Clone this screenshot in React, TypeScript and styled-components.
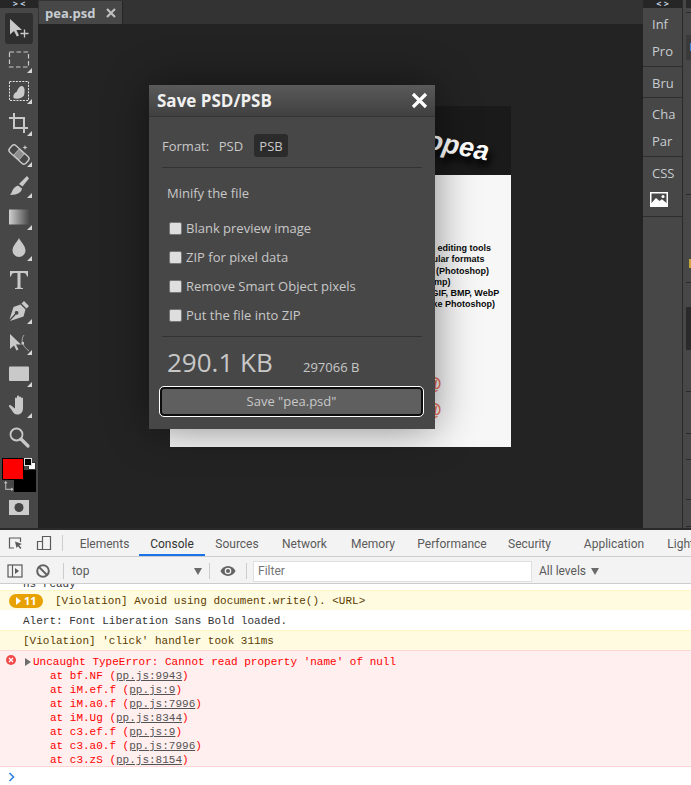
import React from 'react';
import styled, { createGlobalStyle } from 'styled-components';

const GlobalStyle = createGlobalStyle`
  html, body {
    margin: 0;
    padding: 0;
    background: #232323;
  }
  * {
    box-sizing: border-box;
  }
`;

const uiFont = `"Open Sans", "Noto Sans", sans-serif`;
const devFont = `Roboto, "Open Sans", sans-serif`;
const monoFont = `"Liberation Mono", monospace`;
const iconGrey = '#c9c9c9';

const tools = [
  <g key="move" fill={iconGrey}>
    <path d="M1 0v15.500l4-3.600 2.800 5.600 2.200-1-2.600-5.400H13z" />
    <path d="M15.500 10.500v8M11.500 14.500h8" stroke={iconGrey} strokeWidth="1.300" />
  </g>,
  <rect key="marquee" x="0.500" y="2" width="19" height="15" fill="none" stroke={iconGrey} strokeWidth="1.200" strokeDasharray="4.500 2.500" />,
  <g key="lasso">
    <rect x="0.500" y="0.500" width="19" height="19" fill="none" stroke="#e2e2e2" strokeWidth="1" strokeDasharray="2 1.200" />
    <path d="M4.500 17c-.8-3 .8-5 3.500-6.500.8-3 3.200-6 5.500-5.300 2.500.9 2.500 5.500 1.500 9-.8 2.500-8 4.800-10.500 2.800z" fill={iconGrey} />
  </g>,
  <path key="crop" d="M5 0v15h14M0 5h15v15" fill="none" stroke={iconGrey} strokeWidth="2" />,
  <g key="heal" fill="none" stroke={iconGrey}>
    <rect x="-1" y="6" width="22" height="9" rx="3" transform="rotate(42 10 10.500)" strokeWidth="1.400" />
    <rect x="6.500" y="6.500" width="7" height="8" transform="rotate(42 10 10.500)" fill="#8d8d8d" strokeWidth="0.800" />
    <path d="M16 1l.7 1.800 1.800.7-1.800.7-.7 1.800-.7-1.800-1.800-.7 1.800-.7z" fill={iconGrey} stroke="none" />
  </g>,
  <path key="brush" d="M18 0l2 2.500-6.500 8-3.500-2.500zM9 9.500l4 3c-.5 3.500-3.500 6.500-12 6.500 2.500-2 1.500-7 8-9.500z" fill={iconGrey} />,
  <rect key="gradient" x="0" y="2.500" width="20" height="15" fill="url(#toolGradient)" />,
  <path key="drop" d="M10 0c1 3 6.500 7.500 6.500 12.500a6.500 6.500 0 0 1-13 0C3.500 7.500 9 3 10 0z" fill={iconGrey} />,
  <path key="type" d="M1 1h18v5.500h-1c-.5-2.500-1.500-3.500-3.500-3.500h-3v14c0 .8.800 1 2.500 1v1H6v-1c1.700 0 2.500-.2 2.500-1V3h-3C3.500 3 2.500 4 2 6.500H1z" fill={iconGrey} />,
  <path key="pen" d="M15 0l5 5-2.500 2.500-5-5zM11.500 3.500l5 5-2 7L1 20l6-6.500a1.800 1.800 0 1 0-1-1L.5 18.500 4.500 6z" fill={iconGrey} />,
  <g key="pathselect" fill={iconGrey}>
    <path d="M1 1v15l4-3.500 2.500 5 2-1-2.500-5h5z" />
    <path d="M15 2c-3 4-3 10 5 16" fill="none" stroke="#a5a5a5" strokeWidth="1" />
    <rect x="12.500" y="9" width="2.500" height="2.500" />
  </g>,
  <rect key="rect" x="0" y="2.500" width="20" height="14.500" rx="1" fill={iconGrey} />,
  <path key="hand" d="M6 9V3.500a1 1 0 0 1 2 0V1.500a1 1 0 0 1 2 0v1a1 1 0 0 1 2 0v1a1 1 0 0 1 2 0V13c0 4-2 6.500-5.500 6.500-3 0-4-1.500-5.500-4L0 11.500c-.5-1 1-2 2-1l4 3z" fill={iconGrey} />,
  <g key="zoom" fill="none" stroke={iconGrey}>
    <circle cx="7.500" cy="7.500" r="6" strokeWidth="1.800" />
    <path d="M12 12l7 7" strokeWidth="3.200" strokeLinecap="round" />
  </g>,
];

const noCorner = [0, 8, 13];

const outputRows = [
  'at bf.NF (|pp.js:9943|)',
  'at iM.ef.f (|pp.js:9|)',
  'at iM.a0.f (|pp.js:7996|)',
  'at iM.Ug (|pp.js:8344|)',
  'at c3.ef.f (|pp.js:9|)',
  'at c3.a0.f (|pp.js:7996|)',
  'at c3.zS (|pp.js:8154|)',
];

const devTabs = [
  { label: 'Elements', width: 69 },
  { label: 'Console', width: 66, active: true },
  { label: 'Sources', width: 64 },
  { label: 'Network', width: 71 },
  { label: 'Memory', width: 66 },
  { label: 'Performance', width: 92 },
  { label: 'Security', width: 63 },
  { label: 'Application', width: 106 },
  { label: 'Lighthouse', width: 60 },
];

const options = ['Blank preview image', 'ZIP for pixel data', 'Remove Smart Object pixels', 'Put the file into ZIP'];

const docLines = [
  { text: 'Advanced editing tools', indent: 222 },
  { text: 'All popular formats', indent: 232 },
  { text: 'PSD (Photoshop)', indent: 245 },
  { text: 'XCF (Gimp)', indent: 231 },
  { text: 'PNG, JPG, GIF, BMP, WebP', indent: 214 },
  { text: '(just like Photoshop)', indent: 236 },
];

const panelMarks = [
  { top: 0, height: 8 },
  { top: 4, height: 1 },
  { top: 22, height: 25, accent: true },
  { top: 134, height: 1 },
  { top: 64, height: 9, gold: true },
  { top: 14, height: 1 },
  { top: 24, height: 43 },
  { top: 41, height: 1 },
  { top: 41, height: 1 },
  { top: 25, height: 1 },
  { top: 39, height: 1 },
  { top: 26, height: 1 },
];

export default function App() {
  return (
    <>
      <GlobalStyle />
      <Page>
        <Editor>
          <LeftRail>
            <RailStrip>&gt; &lt;</RailStrip>
            <ToolList>
              {tools.map((icon, i) => (
                <Tool key={i} $active={i === 0} $corner={!noCorner.includes(i)}>
                  <ToolIcon viewBox="0 0 20 20">
                    <defs>
                      <linearGradient id="toolGradient">
                        <stop offset="0" stopColor="#cfcfcf" />
                        <stop offset="1" stopColor="#4a4a4a" />
                      </linearGradient>
                    </defs>
                    {icon}
                  </ToolIcon>
                </Tool>
              ))}
            </ToolList>
            <Swatches>
              <BackSwatch />
              <ForeSwatch />
              <MiniWhite />
              <MiniBlack />
              <SwapIcon viewBox="0 0 12 12">
                <path d="M3 0L1 2.500h1.500V9.500H9V11l2.500-2L9 7v1.500H3.500v-6H5z" fill="#c9c9c9" />
              </SwapIcon>
            </Swatches>
            <MaskIcon viewBox="0 0 20 15">
              <rect width="20" height="15" fill="#cdcdcd" />
              <circle cx="10" cy="7.500" r="4.500" fill="#444" />
            </MaskIcon>
          </LeftRail>

          <Workspace>
            <TabBar>
              <DocTab>
                pea.psd
                <TabClose viewBox="0 0 10 10">
                  <path d="M1 1l8 8M9 1l-8 8" stroke="#c0c0c0" strokeWidth="2.200" />
                </TabClose>
              </DocTab>
            </TabBar>
            <Canvas>
              <Doc>
                <DocHeader>
                  <DocLogo>Photopea</DocLogo>
                </DocHeader>
                <DocBody>
                  {docLines.map((line) => (
                    <DocLine key={line.text} $indent={line.indent}>
                      {line.text}
                    </DocLine>
                  ))}
                  <DocMail $gap={63}>@</DocMail>
                  <DocMail $gap={5}>@</DocMail>
                </DocBody>
              </Doc>

              <Dialog>
                <DialogHeader>
                  <DialogTitle>Save PSD/PSB</DialogTitle>
                  <CloseIcon viewBox="0 0 17 17">
                    <path d="M2 2l13 13M15 2L2 15" stroke="#fff" strokeWidth="3.200" />
                  </CloseIcon>
                </DialogHeader>
                <FormatRow>
                  <span>Format:</span>
                  <FormatOption>PSD</FormatOption>
                  <FormatOption $active>PSB</FormatOption>
                </FormatRow>
                <Rule $gap={9} />
                <MinifyLabel>Minify the file</MinifyLabel>
                <OptionList>
                  {options.map((label) => (
                    <OptionRow key={label}>
                      <CheckBox />
                      {label}
                    </OptionRow>
                  ))}
                </OptionList>
                <Rule $gap={12} />
                <SizeRow>
                  <BigSize>290.1 KB</BigSize>
                  <ByteSize>297066 B</ByteSize>
                </SizeRow>
                <SaveButton>Save "pea.psd"</SaveButton>
              </Dialog>
            </Canvas>
          </Workspace>

          <RightRail>
            <RailStrip>&lt; &gt;</RailStrip>
            <PanelGroup $height={59}>
              <PanelLabel>Inf</PanelLabel>
              <PanelLabel>Pro</PanelLabel>
            </PanelGroup>
            <PanelGroup $height={31}>
              <PanelLabel>Bru</PanelLabel>
            </PanelGroup>
            <PanelGroup $height={59}>
              <PanelLabel>Cha</PanelLabel>
              <PanelLabel>Par</PanelLabel>
            </PanelGroup>
            <PanelGroup $height={60}>
              <PanelLabel>CSS</PanelLabel>
              <ImageIcon viewBox="0 0 18 15">
                <rect width="18" height="15" fill="#fff" />
                <rect x="1.500" y="1.500" width="15" height="9.500" fill="#474747" />
                <path d="M1.500 11l4.500-5 3.500 3 2.500-1.800 4.500 3.800v2.500h-15z" fill="#fff" />
                <circle cx="13" cy="4.500" r="1.500" fill="#fff" />
              </ImageIcon>
            </PanelGroup>
          </RightRail>

          <SidePanel>
            {panelMarks.map((mark, i) => (
              <PanelMark key={i} $top={mark.top} $height={mark.height} $accent={mark.accent} $gold={mark.gold} />
            ))}
          </SidePanel>
        </Editor>

        <DevTools>
          <DevTabBar>
            <DevIcon viewBox="0 0 16 16">
              <path d="M6 13H1.500V3h11v4" fill="none" stroke="#5a5a5a" strokeWidth="1.200" />
              <path d="M7 6.500l7 2.500-2.800 1.300 2.300 2.700-1.200 1-2.300-2.700L8.500 13z" fill="#5a5a5a" />
            </DevIcon>
            <DevIcon viewBox="0 0 16 16">
              <path d="M6.500 1.500h8v13h-8zM1.500 6.500h5v8h-5z" fill="none" stroke="#5a5a5a" strokeWidth="1.200" />
            </DevIcon>
            <TabDivider />
            {devTabs.map((tab) => (
              <DevTab key={tab.label} $width={tab.width} $active={tab.active}>
                {tab.label}
              </DevTab>
            ))}
          </DevTabBar>

          <ConsoleBar>
            <DevIcon viewBox="0 0 16 16">
              <rect x="1" y="2" width="14" height="12" fill="none" stroke="#5a5a5a" strokeWidth="1.200" />
              <path d="M5.500 2v12" stroke="#5a5a5a" strokeWidth="1.200" />
              <path d="M8 5l4 3-4 3z" fill="#5a5a5a" />
            </DevIcon>
            <DevIcon viewBox="0 0 16 16">
              <circle cx="8" cy="8" r="5.800" fill="none" stroke="#636363" strokeWidth="2" />
              <path d="M4 4l8 8" stroke="#636363" strokeWidth="2" />
            </DevIcon>
            <BarDivider />
            <ContextSelect>
              top
              <DownArrow />
            </ContextSelect>
            <BarDivider />
            <EyeIcon viewBox="0 0 16 12">
              <path d="M8 1C4.500 1 1.800 3.200.5 6c1.300 2.800 4 5 7.500 5s6.200-2.200 7.500-5C14.200 3.200 11.500 1 8 1z" fill="#636363" />
              <circle cx="8" cy="6" r="3.300" fill="#f3f3f3" />
              <circle cx="8" cy="6" r="2" fill="#636363" />
            </EyeIcon>
            <BarDivider />
            <FilterInput>Filter</FilterInput>
            <LevelSelect>
              All levels
              <DownArrow />
            </LevelSelect>
          </ConsoleBar>

          <Messages>
            <ClippedRow>ns ready</ClippedRow>
            <MessageRow $kind="warn">
              <Badge>
                <BadgeArrow />
                11
              </Badge>
              [Violation] Avoid using document.write(). &lt;URL&gt;
            </MessageRow>
            <MessageRow>Alert: Font Liberation Sans Bold loaded.</MessageRow>
            <MessageRow $kind="warn">[Violation] 'click' handler took 311ms</MessageRow>
            <ErrorRow>
              <ErrorIcon viewBox="0 0 10 10">
                <circle cx="5" cy="5" r="5" fill="#ef4a4a" />
                <path d="M3 3l4 4M7 3L3 7" stroke="#fff" strokeWidth="1.300" />
              </ErrorIcon>
              <ErrorHead>
                <Disclosure />
                Uncaught TypeError: Cannot read property 'name' of null
              </ErrorHead>
              {outputRows.map((row) => {
                const [before, link, after] = row.split('|');
                return (
                  <StackLine key={row}>
                    {before}
                    <StackLink>{link}</StackLink>
                    {after}
                  </StackLine>
                );
              })}
            </ErrorRow>
            <PromptRow>
              <PromptIcon viewBox="0 0 8 10">
                <path d="M1.500 1l4 4-4 4" fill="none" stroke="#2f7fe0" strokeWidth="1.600" />
              </PromptIcon>
            </PromptRow>
          </Messages>
        </DevTools>
      </Page>
    </>
  );
}

const Page = styled.div`
  width: 691px;
  height: 785px;
  display: flex;
  flex-direction: column;
  overflow: hidden;
`;

const Editor = styled.div`
  height: 528px;
  display: flex;
  background: #232323;
  font-family: ${uiFont};
`;

const LeftRail = styled.aside`
  width: 38px;
  flex: none;
  display: flex;
  flex-direction: column;
  background: #474747;
`;

const RailStrip = styled.div`
  height: 8px;
  flex: none;
  background: #262626;
  color: #c4d4e4;
  font-size: 9px;
  font-weight: 700;
  line-height: 8px;
  text-align: center;
  overflow: hidden;
`;

const ToolList = styled.div`
  padding: 5px 5px 0;
  display: flex;
  flex-direction: column;
`;

const Tool = styled.div<{ $active?: boolean; $corner?: boolean }>`
  position: relative;
  height: 31.4px;
  flex: none;
  display: flex;
  align-items: center;
  justify-content: center;
  border-radius: 3px;
  background: ${(p) => (p.$active ? '#2f2f2f' : 'transparent')};

  &::after {
    content: '';
    display: ${(p) => (p.$corner ? 'block' : 'none')};
    position: absolute;
    right: 1px;
    bottom: 3px;
    border-style: solid;
    border-width: 0 0 5px 5px;
    border-color: transparent transparent #d6d6d6 transparent;
  }
`;

const ToolIcon = styled.svg`
  width: 20px;
  height: 20px;
  overflow: visible;
`;

const Swatches = styled.div`
  position: relative;
  height: 34px;
  margin: 6px 2px 0;
  flex: none;
`;

const ForeSwatch = styled.div`
  position: absolute;
  left: 0;
  top: 0;
  width: 22px;
  height: 22px;
  background: #f00;
  border: 1px solid #000;
`;

const BackSwatch = styled.div`
  position: absolute;
  left: 12px;
  top: 12px;
  width: 22px;
  height: 22px;
  background: #000;
`;

const MiniWhite = styled.div`
  position: absolute;
  left: 26px;
  top: 4px;
  width: 8px;
  height: 8px;
  background: #fff;
  border: 1px solid #333;
`;

const MiniBlack = styled.div`
  position: absolute;
  left: 22px;
  top: 0;
  width: 8px;
  height: 8px;
  background: #000;
  border: 1px solid #ddd;
`;

const SwapIcon = styled.svg`
  position: absolute;
  left: 1px;
  top: 23px;
  width: 11px;
  height: 11px;
`;

const MaskIcon = styled.svg`
  width: 20px;
  height: 15px;
  margin: 8px 0 0 9px;
  flex: none;
`;

const Workspace = styled.main`
  width: 605px;
  flex: none;
  display: flex;
  flex-direction: column;
`;

const TabBar = styled.div`
  height: 24px;
  flex: none;
  padding-top: 1px;
  padding-left: 1px;
  background: #333;
`;

const DocTab = styled.div`
  width: 84px;
  height: 23px;
  padding-left: 6px;
  display: flex;
  align-items: center;
  gap: 11px;
  background: #474747;
  border-right: 1px solid #262626;
  color: #c6ccd2;
  font-size: 13px;
  font-weight: 700;
`;

const TabClose = styled.svg`
  width: 10px;
  height: 10px;
`;

const Canvas = styled.div`
  position: relative;
  flex: 1;
  padding: 82px 0 0 132px;
  background: #232323;
`;

const Doc = styled.div`
  width: 341px;
  height: 341px;
  display: flex;
  flex-direction: column;
  background: #f7f7f7;
  overflow: hidden;
`;

const DocHeader = styled.div`
  height: 69px;
  flex: none;
  padding: 18px 21px 0 0;
  display: flex;
  justify-content: flex-end;
  background: #1a1a1a;
`;

const DocLogo = styled.div`
  height: 32px;
  color: #fff;
  font-family: "Liberation Sans", sans-serif;
  font-size: 27px;
  font-weight: 700;
  font-style: italic;
  line-height: 32px;
  white-space: nowrap;
  transform: rotate(11deg);
  text-shadow: 4px 6px 6px #000;
`;

const DocBody = styled.div`
  flex: 1;
  padding-top: 68px;
  display: flex;
  flex-direction: column;
  font-family: "Liberation Sans", sans-serif;
`;

const DocLine = styled.div<{ $indent: number }>`
  padding-left: ${(p) => p.$indent}px;
  color: #0a0a0a;
  font-size: 9px;
  font-weight: 700;
  line-height: 11.3px;
  white-space: nowrap;
`;

const DocMail = styled.div<{ $gap: number }>`
  margin-top: ${(p) => p.$gap}px;
  padding-left: 254px;
  height: 21px;
  color: #ea6a50;
  font-size: 18px;
  font-weight: 700;
  line-height: 21px;
`;

const Dialog = styled.section`
  position: absolute;
  left: 111px;
  top: 61px;
  width: 286px;
  height: 344px;
  background: #474747;
  color: #c8c8c8;
  font-size: 13px;
  box-shadow: 0 0 40px rgba(0, 0, 0, 0.45);
`;

const DialogHeader = styled.header`
  height: 32px;
  padding: 0 7px 0 8px;
  display: flex;
  align-items: center;
  justify-content: space-between;
  background: linear-gradient(#5a5a5a, #404040);
  border-bottom: 1px solid #353535;
`;

const DialogTitle = styled.h2`
  margin: 0;
  color: #f0f0f0;
  font-size: 17px;
  font-weight: 700;
`;

const CloseIcon = styled.svg`
  width: 17px;
  height: 17px;
`;

const FormatRow = styled.div`
  height: 25px;
  margin: 16px 13px 0;
  display: flex;
  align-items: center;

  > span {
    width: 52px;
  }
`;

const FormatOption = styled.div<{ $active?: boolean }>`
  width: 34px;
  height: 23px;
  display: flex;
  align-items: center;
  justify-content: center;
  border-radius: 3px;
  background: ${(p) => (p.$active ? '#2b2b2b' : 'transparent')};
  margin-left: ${(p) => (p.$active ? '6px' : '0')};
`;

const Rule = styled.hr<{ $gap: number }>`
  height: 1px;
  margin: ${(p) => p.$gap}px 13px 0;
  border: 0;
  background: #333;
`;

const MinifyLabel = styled.div`
  margin: 16px 18px 0;
  line-height: 18px;
`;

const OptionList = styled.div`
  margin: 17px 21px 0 20px;
  display: flex;
  flex-direction: column;
  gap: 11px;
`;

const OptionRow = styled.label`
  height: 18px;
  display: flex;
  align-items: center;
  gap: 4px;
`;

const CheckBox = styled.span`
  width: 13px;
  height: 13px;
  flex: none;
  margin-top: 1px;
  border: 1px solid #777;
  border-radius: 2px;
  background: #dedede;
`;

const SizeRow = styled.div`
  height: 34px;
  margin: 8px 18px 0;
  display: flex;
  align-items: baseline;
`;

const BigSize = styled.div`
  width: 136px;
  font-size: 26px;
  line-height: 34px;
`;

const ByteSize = styled.div`
  font-size: 13px;
`;

const SaveButton = styled.button`
  display: block;
  width: 263px;
  height: 29px;
  margin: 8px 0 0 11px;
  padding: 0 0 2px;
  border: 2px solid #0d0d0d;
  border-radius: 4px;
  outline: 1px solid #fff;
  background: #5f5f5f;
  color: #c8c8c8;
  font-family: ${uiFont};
  font-size: 13px;
`;

const RightRail = styled.aside`
  width: 39px;
  flex: none;
  display: flex;
  flex-direction: column;
  background: #474747;
`;

const PanelGroup = styled.div<{ $height: number }>`
  height: ${(p) => p.$height}px;
  flex: none;
  padding-top: 3px;
  border-bottom: 1px solid #2e2e2e;
  display: flex;
  flex-direction: column;
`;

const PanelLabel = styled.div`
  height: 27px;
  padding-left: 9px;
  color: #c8ccd0;
  font-size: 13px;
  line-height: 27px;
`;

const ImageIcon = styled.svg`
  width: 18px;
  height: 15px;
  margin: 5px 0 0 7px;
`;

const SidePanel = styled.aside`
  flex: 1;
  padding-left: 3px;
  display: flex;
  flex-direction: column;
  background: #474747;
  border-left: 1px solid #2a2a2a;
`;

const PanelMark = styled.div<{ $top: number; $height: number; $accent?: boolean; $gold?: boolean }>`
  position: relative;
  flex: none;
  margin-top: ${(p) => p.$top}px;
  margin-left: ${(p) => (p.$gold ? '3px' : '0')};
  height: ${(p) => p.$height}px;
  background: ${(p) => (p.$gold ? '#c9a43a' : p.$accent ? '#3a3a3a' : '#2a2a2a')};

  &::after {
    content: '';
    display: ${(p) => (p.$accent ? 'block' : 'none')};
    position: absolute;
    right: 0;
    top: 8px;
    width: 1px;
    height: 8px;
    background: #3d7fd0;
  }
`;

const DevTools = styled.section`
  flex: 1;
  display: flex;
  flex-direction: column;
  background: #fff;
  border-top: 2px solid #2a2a2a;
  color: #333;
  font-family: ${devFont};
  font-size: 12px;
`;

const DevTabBar = styled.div`
  height: 27px;
  flex: none;
  display: flex;
  align-items: stretch;
  padding-left: 8px;
  background: #f3f3f3;
  border-bottom: 1px solid #ccc;
  overflow: hidden;
`;

const ConsoleBar = styled.div`
  height: 27px;
  flex: none;
  display: flex;
  align-items: center;
  padding: 2px 0 0 7px;
  background: #f3f3f3;
  border-bottom: 1px solid #ccc;
`;

const DevIcon = styled.svg`
  width: 16px;
  height: 16px;
  flex: none;
  align-self: center;
  margin-right: 12px;
`;

const BarDivider = styled.div`
  width: 1px;
  height: 16px;
  flex: none;
  align-self: center;
  background: #ccc;
`;

const TabDivider = styled(BarDivider)`
  margin: 0 7px 0 -2px;
`;

const DevTab = styled.div<{ $width: number; $active?: boolean }>`
  width: ${(p) => p.$width}px;
  flex: none;
  padding-top: 3px;
  display: flex;
  align-items: center;
  justify-content: center;
  color: ${(p) => (p.$active ? '#333' : '#5a5a5a')};
  border-bottom: 2px solid ${(p) => (p.$active ? '#1a73e8' : 'transparent')};
  white-space: nowrap;
`;

const ContextSelect = styled.div`
  width: 145px;
  padding: 0 7px 0 8px;
  display: flex;
  align-items: center;
  justify-content: space-between;
  color: #5a5a5a;
`;

const DownArrow = styled.span`
  width: 0;
  height: 0;
  border-style: solid;
  border-width: 7px 4px 0;
  border-color: #6a6a6a transparent transparent;
`;

const EyeIcon = styled.svg`
  width: 16px;
  height: 12px;
  flex: none;
  margin: 0 10px;
`;

const FilterInput = styled.div`
  width: 279px;
  height: 21px;
  margin-left: 6px;
  padding-left: 4px;
  flex: none;
  border: 1px solid #e0e0e0;
  background: #fff;
  color: #757575;
  line-height: 19px;
`;

const LevelSelect = styled.div`
  margin-left: 7px;
  display: flex;
  align-items: center;
  gap: 5px;
  color: #5a5a5a;
`;

const Messages = styled.div`
  flex: 1;
  display: flex;
  flex-direction: column;
  font-family: ${monoFont};
  font-size: 11px;
`;

const ClippedRow = styled.div`
  height: 6px;
  padding-left: 23px;
  overflow: hidden;
  color: #333;
  line-height: 0;
`;

const MessageRow = styled.div<{ $kind?: 'warn' }>`
  height: 20px;
  padding-left: 23px;
  display: flex;
  align-items: center;
  background: ${(p) => (p.$kind === 'warn' ? '#fffbe0' : '#fff')};
  border-top: 1px solid ${(p) => (p.$kind === 'warn' ? '#fff5c2' : '#fff')};
  color: ${(p) => (p.$kind === 'warn' ? '#5c3c00' : '#333')};
  white-space: pre;
`;

const Badge = styled.span`
  width: 34px;
  height: 14px;
  margin: 0 12px 0 -14px;
  padding-left: 7px;
  display: inline-flex;
  align-items: center;
  gap: 3px;
  border-radius: 7px;
  background: #e8a200;
  color: #fff;
  font-family: ${uiFont};
  font-size: 11px;
  font-weight: 700;
`;

const BadgeArrow = styled.span`
  border-style: solid;
  border-width: 4px 0 4px 5px;
  border-color: transparent transparent transparent #fff;
`;

const ErrorRow = styled.div`
  position: relative;
  height: 117px;
  padding: 4px 0 0 33px;
  background: #ffefef;
  border-top: 1px solid #ffd6d6;
  border-bottom: 1px solid #ffd6d6;
  color: #f00;
`;

const ErrorIcon = styled.svg`
  position: absolute;
  left: 6px;
  top: 4px;
  width: 10px;
  height: 10px;
`;

const ErrorHead = styled.div`
  position: relative;
  line-height: 14px;
  white-space: pre;
`;

const Disclosure = styled.span`
  position: absolute;
  left: -8px;
  top: 3px;
  border-style: solid;
  border-width: 4px 0 4px 6px;
  border-color: transparent transparent transparent #6e6e6e;
`;

const StackLine = styled.div`
  padding-left: 17px;
  line-height: 14px;
  white-space: pre;
`;

const StackLink = styled.span`
  color: #545454;
  text-decoration: underline;
`;

const PromptRow = styled.div`
  flex: 1;
  padding: 5px 0 0 8px;
  background: #fff;
`;

const PromptIcon = styled.svg`
  display: block;
  width: 8px;
  height: 10px;
`;
